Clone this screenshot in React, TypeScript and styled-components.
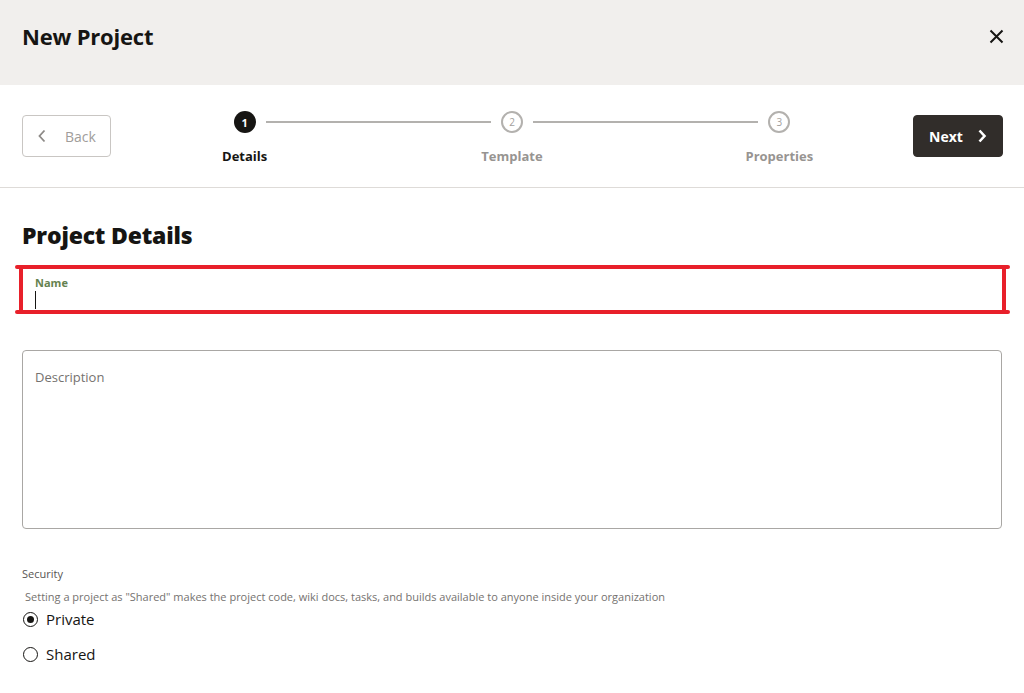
import styled, { createGlobalStyle } from 'styled-components';

const GlobalStyle = createGlobalStyle`
  html, body {
    margin: 0;
    padding: 0;
    background: #ffffff;
    font-family: "Open Sans", "Noto Sans", sans-serif;
    color: #161513;
  }
  * { box-sizing: border-box; }
`;

const Page = styled.div`
  width: 1024px;
  height: 693px;
  overflow: hidden;
  background: #fff;
`;

const Header = styled.header`
  height: 85px;
  background: #f1efed;
  display: flex;
  align-items: center;
  justify-content: space-between;
  padding: 0 16px 13px 22px;
`;

const Title = styled.h1`
  margin: 0;
  font-size: 22px;
  font-weight: 700;
  letter-spacing: -0.2px;
  color: #161513;
`;

const CloseButton = styled.button`
  width: 24px;
  height: 24px;
  border: none;
  background: none;
  padding: 0;
  display: flex;
  align-items: center;
  justify-content: center;
  cursor: pointer;
`;

const Toolbar = styled.div`
  height: 103px;
  border-bottom: 1px solid #dedbd8;
  display: flex;
  align-items: center;
  padding: 0 21px 0 22px;
`;

const NavButton = styled.button<{ $primary?: boolean }>`
  width: ${p => (p.$primary ? '90px' : '89px')};
  height: 42px;
  border-radius: 4px;
  border: 1px solid ${p => (p.$primary ? '#312d2a' : '#c9c6c3')};
  background: ${p => (p.$primary ? '#312d2a' : '#fff')};
  color: ${p => (p.$primary ? '#fff' : '#a09d9a')};
  font-family: "Open Sans", sans-serif;
  font-size: 14px;
  font-weight: ${p => (p.$primary ? 700 : 400)};
  display: flex;
  align-items: center;
  justify-content: center;
  gap: ${p => (p.$primary ? '14px' : '18px')};
  padding: 0;
  flex-shrink: 0;
  cursor: pointer;
`;

const Stepper = styled.div`
  flex: 1;
  display: grid;
  grid-template-columns: repeat(3, 1fr);
  margin-top: 4px;
`;

const Step = styled.div`
  display: flex;
  flex-direction: column;
  align-items: center;
  gap: 14px;
`;

const StepTrack = styled.div`
  width: 100%;
  display: flex;
  align-items: center;
`;

const Connector = styled.div<{ $hidden?: boolean; $side: 'left' | 'right' }>`
  flex: 1;
  height: 2px;
  background: ${p => (p.$hidden ? 'transparent' : '#b3b1ae')};
  margin: ${p => (p.$side === 'left' ? '0 10px 0 0' : '0 0 0 10px')};
`;

const StepCircle = styled.div<{ $active?: boolean }>`
  width: 22px;
  height: 22px;
  border-radius: 50%;
  flex-shrink: 0;
  display: flex;
  align-items: center;
  justify-content: center;
  font-size: ${p => (p.$active ? '11px' : '10px')};
  font-weight: ${p => (p.$active ? 700 : 400)};
  background: ${p => (p.$active ? '#161513' : '#fff')};
  color: ${p => (p.$active ? '#fff' : '#a3a09d')};
  border: ${p => (p.$active ? 'none' : '2px solid #b3b1ae')};
`;

const StepLabel = styled.div<{ $active?: boolean }>`
  font-size: 13px;
  font-weight: 700;
  line-height: 18px;
  color: ${p => (p.$active ? '#161513' : '#979491')};
`;

const Content = styled.main`
  padding: 26px 22px 0 22px;
`;

const SectionTitle = styled.h2`
  margin: 0 0 9px 0;
  font-size: 23px;
  font-weight: 800;
  line-height: 42px;
  letter-spacing: -0.2px;
  color: #161513;
`;

const NameField = styled.div`
  position: relative;
  margin: 0 -4px 0 -3px;
  height: 49px;
  border: 4px solid #e8202a;
  padding: 7px 0 0 12px;

  &::before,
  &::after {
    content: '';
    position: absolute;
    left: -8px;
    right: -8px;
    height: 4px;
    border-radius: 2px;
    background: #e8202a;
  }
  &::before { top: -4px; }
  &::after { bottom: -4px; }
`;

const FieldLabel = styled.label`
  display: block;
  font-size: 11px;
  font-weight: 700;
  line-height: 14px;
  color: #65824f;
`;

const Caret = styled.span`
  display: block;
  width: 1px;
  height: 18px;
  margin-top: 1px;
  background: #161513;
`;

const TextArea = styled.div`
  margin-top: 36px;
  height: 179px;
  border: 1px solid #a9a7a4;
  border-radius: 4px;
  padding: 17px 12px;
  font-size: 13px;
  color: #75726f;
`;

const SecurityLabel = styled.div`
  margin-top: 37px;
  font-size: 11px;
  line-height: 16px;
  color: #575553;
`;

const HelpText = styled.div`
  margin: 7px 0 0 3px;
  font-size: 11px;
  line-height: 16px;
  color: #75726f;
`;

const RadioGroup = styled.div`
  display: flex;
  flex-direction: column;
  gap: 14px;
  margin-top: 4px;
`;

const RadioRow = styled.label`
  display: flex;
  align-items: center;
  gap: 8px;
  font-size: 15px;
  line-height: 21px;
  color: #161513;
`;

const RadioDot = styled.span<{ $checked?: boolean }>`
  width: 15px;
  height: 15px;
  border-radius: 50%;
  border: 1.5px solid #161513;
  margin-left: 1px;
  display: flex;
  align-items: center;
  justify-content: center;

  &::after {
    content: '';
    width: 7px;
    height: 7px;
    border-radius: 50%;
    background: ${p => (p.$checked ? '#161513' : 'transparent')};
  }
`;

const steps = [
  { n: 1, label: 'Details', active: true },
  { n: 2, label: 'Template', active: false },
  { n: 3, label: 'Properties', active: false },
];

function ChevronLeft() {
  return (
    <svg width="10" height="14" viewBox="0 0 10 14">
      <path d="M7.5 1.5 L2.5 7 L7.5 12.5" fill="none" stroke="#8d8a87" strokeWidth="1.8" />
    </svg>
  );
}

function ChevronRight() {
  return (
    <svg width="10" height="14" viewBox="0 0 10 14">
      <path d="M2.5 1.5 L7.5 7 L2.5 12.5" fill="none" stroke="#fff" strokeWidth="2.6" />
    </svg>
  );
}

export default function App() {
  return (
    <Page>
      <GlobalStyle />
      <Header>
        <Title>New Project</Title>
        <CloseButton aria-label="Close">
          <svg width="15" height="15" viewBox="0 0 15 15">
            <path d="M1.5 1.5 L13.5 13.5 M13.5 1.5 L1.5 13.5" stroke="#161513" strokeWidth="2" />
          </svg>
        </CloseButton>
      </Header>

      <Toolbar>
        <NavButton>
          <ChevronLeft />
          Back
        </NavButton>
        <Stepper>
          {steps.map((s, i) => (
            <Step key={s.n}>
              <StepTrack>
                <Connector $side="left" $hidden={i === 0} />
                <StepCircle $active={s.active}>{s.n}</StepCircle>
                <Connector $side="right" $hidden={i === steps.length - 1} />
              </StepTrack>
              <StepLabel $active={s.active}>{s.label}</StepLabel>
            </Step>
          ))}
        </Stepper>
        <NavButton $primary>
          Next
          <ChevronRight />
        </NavButton>
      </Toolbar>

      <Content>
        <SectionTitle>Project Details</SectionTitle>
        <NameField>
          <FieldLabel>Name</FieldLabel>
          <Caret />
        </NameField>
        <TextArea>Description</TextArea>
        <SecurityLabel>Security</SecurityLabel>
        <HelpText>
          Setting a project as "Shared" makes the project code, wiki docs, tasks, and builds available to anyone inside your organization
        </HelpText>
        <RadioGroup>
          <RadioRow>
            <RadioDot $checked />
            Private
          </RadioRow>
          <RadioRow>
            <RadioDot />
            Shared
          </RadioRow>
        </RadioGroup>
      </Content>
    </Page>
  );
}
